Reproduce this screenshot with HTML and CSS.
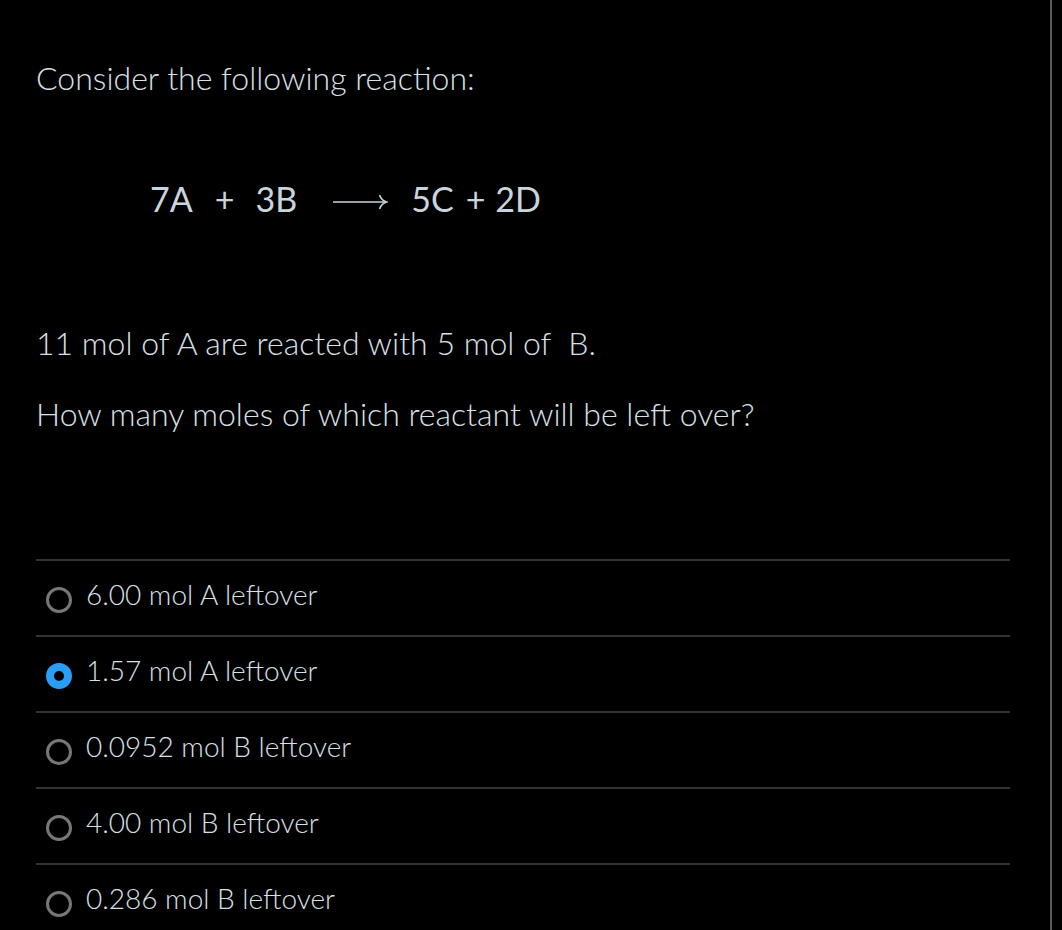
FILE: index.html
```html
<!DOCTYPE html>
<html>
<head>
<meta charset="utf-8">
<link rel="stylesheet" href="styles.css">
</head>
<body>
<div class="page">
  <main class="content">
    <p class="line intro">Consider the following reaction:</p>
    <div class="equation">
      <span>7A</span><span class="plus">+</span><span>3B</span>
      <span class="arrow"><svg width="56" height="22" viewBox="0 0 56 22"><path d="M1 14H53" stroke="currentColor" stroke-width="1.6" fill="none"/><path d="M47.5 7Q49.5 12.5 54.5 14Q49.5 15.5 47.5 21" stroke="currentColor" stroke-width="1.6" fill="none"/></svg></span>
      <span>5C</span><span class="plus small">+</span><span>2D</span>
    </div>
    <p class="line given">11 mol of A are reacted with 5 mol of&nbsp; B.</p>
    <p class="line question">How many moles of which reactant will be left over?</p>
    <ul class="options">
      <li class="option"><span class="radio"></span><span class="label">6.00 mol A leftover</span></li>
      <li class="option"><span class="radio checked"></span><span class="label">1.57 mol A leftover</span></li>
      <li class="option"><span class="radio"></span><span class="label">0.0952 mol B leftover</span></li>
      <li class="option"><span class="radio"></span><span class="label">4.00 mol B leftover</span></li>
      <li class="option"><span class="radio"></span><span class="label">0.286 mol B leftover</span></li>
    </ul>
  </main>
  <div class="rule"></div>
</div>
</body>
</html>
```
FILE: styles.css
```css
html, body {
  margin: 0;
  padding: 0;
  background: #000;
}
body {
  font-family: Lato, "Open Sans", sans-serif;
  color: #d8e0e6;
  height: 930px;
  overflow: hidden;
}
.page {
  display: flex;
  height: 930px;
}
.content {
  width: 974px;
  padding-left: 36px;
  padding-top: 58px;
}
.rule {
  margin-left: 40px;
  width: 2px;
  background: #5a5a5a;
  height: 930px;
}
.line {
  margin: 0;
  font-size: 32px;
  font-weight: 300;
  line-height: 40px;
}
.equation {
  display: flex;
  align-items: center;
  margin: 81px 0 0 114px;
  font-size: 34px;
  line-height: 40px;
  color: #c9d5dc;
  height: 40px;
}
.plus {
  margin: 0 21px 0 22px;
}
.plus.small {
  margin: 0 10px 0 12px;
}
.arrow {
  display: flex;
  margin: 0 23px 0 35px;
}
.given {
  margin-top: 104px;
}
.question {
  margin-top: 31px;
}
.options {
  list-style: none;
  margin: 125px 0 0;
  padding: 0;
}
.option {
  display: flex;
  align-items: flex-start;
  gap: 14px;
  height: 74px;
  border-top: 2px solid #333;
  padding-left: 10px;
  font-size: 28px;
  font-weight: 300;
}
.radio {
  box-sizing: border-box;
  margin-top: 26px;
  width: 26px;
  height: 26px;
  border-radius: 50%;
  border: 3px solid #777;
  flex: none;
}
.radio.checked {
  border: 8px solid #2a9df4;
  background: #000;
}
.label {
  margin-top: 16px;
  line-height: 34px;
}
```
